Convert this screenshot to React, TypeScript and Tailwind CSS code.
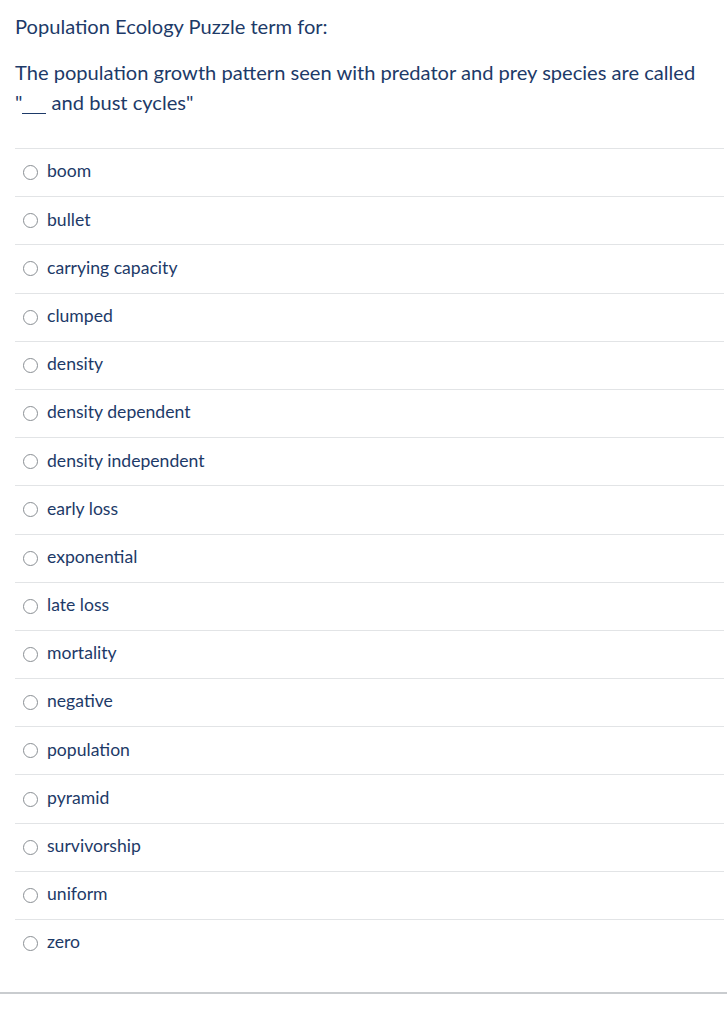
import React from 'react';

const options = [
  'boom',
  'bullet',
  'carrying capacity',
  'clumped',
  'density',
  'density dependent',
  'density independent',
  'early loss',
  'exponential',
  'late loss',
  'mortality',
  'negative',
  'population',
  'pyramid',
  'survivorship',
  'uniform',
  'zero',
];

export default function App() {
  return (
    <div className="min-h-[1024px] bg-white font-['Lato','Liberation_Sans',sans-serif] text-[#1d3a68]">
      <div className="border-b-2 border-[#c9cccf] pb-[25px]">
        {/* Question header */}
        <div className="px-[15px] pt-[11px]">
          <p className="text-[20.1px] leading-[30px]">Population Ecology Puzzle term for:</p>
          <p className="mt-[16px] text-[20.1px] leading-[30px]">
            The population growth pattern seen with predator and prey species are called
            <br />
            "<span className="inline-block h-[1px] w-[24px] bg-[#1d3a68] align-[-4px]" /> and bust cycles"
          </p>
        </div>

        {/* Answer list */}
        <ul className="ml-[15px] mr-[3px] mt-[31px]">
          {options.map((opt) => (
            <li key={opt} className="flex h-[48.2px] items-center border-t border-[#e2e4e6]">
              <span className="ml-[8px] h-[15px] w-[15px] shrink-0 rounded-full border border-[#8a8f94] bg-white" />
              <span className="ml-[9px] -mt-[2px] text-[17.6px]">{opt}</span>
            </li>
          ))}
        </ul>
      </div>
    </div>
  );
}
